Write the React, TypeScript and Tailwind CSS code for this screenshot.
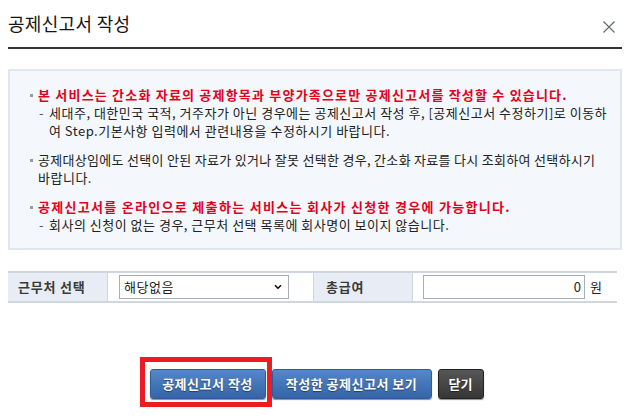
import React from "react"
import { ChevronDown } from "lucide-react"

const font = { fontFamily: '"Noto Sans CJK KR", "Noto Sans", sans-serif' }

function Bullet({ children }: { children: React.ReactNode }) {
  return (
    <div className="flex items-start">
      <span className="mt-[8px] mr-[5px] h-[3px] w-[3px] shrink-0 bg-[#9a9a9a]" />
      <div className="flex flex-col">{children}</div>
    </div>
  )
}

function SubLine({ children }: { children: React.ReactNode }) {
  return (
    <div className="flex items-start">
      <span className="w-[11px] shrink-0 pl-[1px] text-[#555]">-</span>
      <div className="flex flex-col">{children}</div>
    </div>
  )
}

function BlueButton({ children, width }: { children: React.ReactNode; width: string }) {
  return (
    <button
      className={`${width} h-[30px] rounded-[3px] border border-[#2f5b9c] bg-gradient-to-b from-[#5687ca] to-[#3564a8] text-[13px] font-bold tracking-[0.5px] text-white shadow-[0_1px_1px_rgba(0,0,0,0.45)] [text-shadow:0_1px_1px_rgba(0,0,0,0.45)]`}
    >
      {children}
    </button>
  )
}

export default function App() {
  return (
    <div className="min-h-[419px] w-[631px] bg-white pl-[8px] pr-[9px]" style={font}>
      {/* Header */}
      <div className="flex h-[49px] items-center justify-between border-b-2 border-[#333] pb-[2px]">
        <h1 className="text-[18px] font-normal leading-none tracking-[0.3px] text-[#151515]">공제신고서 작성</h1>
        <button className="mr-[7px] mt-[8px] h-[12px] w-[12px]">
          <svg viewBox="0 0 12 12" className="h-[12px] w-[12px]">
            <path d="M0.5 0.5L11.5 11.5M11.5 0.5L0.5 11.5" stroke="#5f6670" strokeWidth="1.1" fill="none" />
          </svg>
        </button>
      </div>

      {/* Notice box */}
      <div className="mt-[20px] flex flex-col gap-[11px] border-2 border-[#e1e7ef] bg-[#f4f7fb] pb-[14px] pl-[20px] pt-[15px] text-[13px] leading-[18px] tracking-[0.5px] text-[#222]">
        <Bullet>
          <p className="whitespace-nowrap text-[13px] font-bold tracking-[1.2px] text-[#e3001b]">
            본 서비스는 간소화 자료의 공제항목과 부양가족으로만 공제신고서를 작성할 수 있습니다.
          </p>
          <SubLine>
            <p className="whitespace-nowrap">
              세대주, 대한민국 국적, 거주자가 아닌 경우에는 공제신고서 작성 후, [공제신고서 수정하기]로 이동하
            </p>
            <p className="whitespace-nowrap">여 Step.기본사항 입력에서 관련내용을 수정하시기 바랍니다.</p>
          </SubLine>
        </Bullet>
        <Bullet>
          <p className="whitespace-nowrap tracking-[0.3px]">
            공제대상임에도 선택이 안된 자료가 있거나 잘못 선택한 경우, 간소화 자료를 다시 조회하여 선택하시기
          </p>
          <p className="whitespace-nowrap">바랍니다.</p>
        </Bullet>
        <Bullet>
          <p className="whitespace-nowrap text-[13px] font-bold tracking-[1.3px] text-[#e3001b]">
            공제신고서를 온라인으로 제출하는 서비스는 회사가 신청한 경우에 가능합니다.
          </p>
          <SubLine>
            <p className="whitespace-nowrap">회사의 신청이 없는 경우, 근무처 선택 목록에 회사명이 보이지 않습니다.</p>
          </SubLine>
        </Bullet>
      </div>

      {/* Form row */}
      <div className="mt-[21px] grid w-[609px] grid-cols-[100px_205px_100px_1fr] border-y-2 border-[#cfd6e0] text-[13px] text-[#222]">
        <div className="flex h-[28px] items-center border-r border-[#cfd6e0] bg-[#e8edf5] pl-[10px] text-[13px] font-bold tracking-[0.8px] text-[#3a3a3a]">
          근무처 선택
        </div>
        <div className="flex items-center pl-[11px]">
          <div className="flex h-[24px] w-[170px] items-center justify-between border border-[#a9aeb5] bg-white pl-[4px] pr-[5px]">
            <span className="tracking-[0.5px]">해당없음</span>
            <ChevronDown className="h-[10px] w-[10px] text-[#111]" strokeWidth={4} />
          </div>
        </div>
        <div className="flex items-center border-x border-[#cfd6e0] bg-[#e8edf5] pl-[12px] text-[13px] font-bold tracking-[0.8px] text-[#3a3a3a]">
          총급여
        </div>
        <div className="flex items-center pl-[10px]">
          <div className="flex h-[24px] w-[162px] items-center justify-end border border-[#a9aeb5] bg-white pr-[3px]">
            0
          </div>
          <span className="ml-[5px]">원</span>
        </div>
      </div>

      {/* Buttons */}
      <div className="mt-[66px] flex justify-center gap-[6px] pl-[3px]">
        <div className="relative">
          <BlueButton width="w-[116px]">공제신고서 작성</BlueButton>
          <div className="pointer-events-none absolute -bottom-[8px] -left-[10px] -right-[6px] -top-[12px] border-[5px] border-[#ec1c24]" />
        </div>
        <BlueButton width="w-[160px]">작성한 공제신고서 보기</BlueButton>
        <button className="h-[30px] w-[46px] rounded-[3px] border border-[#222] bg-gradient-to-b from-[#575757] to-[#363636] text-[13px] font-bold text-white shadow-[0_1px_1px_rgba(0,0,0,0.45)] [text-shadow:0_1px_1px_rgba(0,0,0,0.5)]">
          닫기
        </button>
      </div>
    </div>
  )
}
